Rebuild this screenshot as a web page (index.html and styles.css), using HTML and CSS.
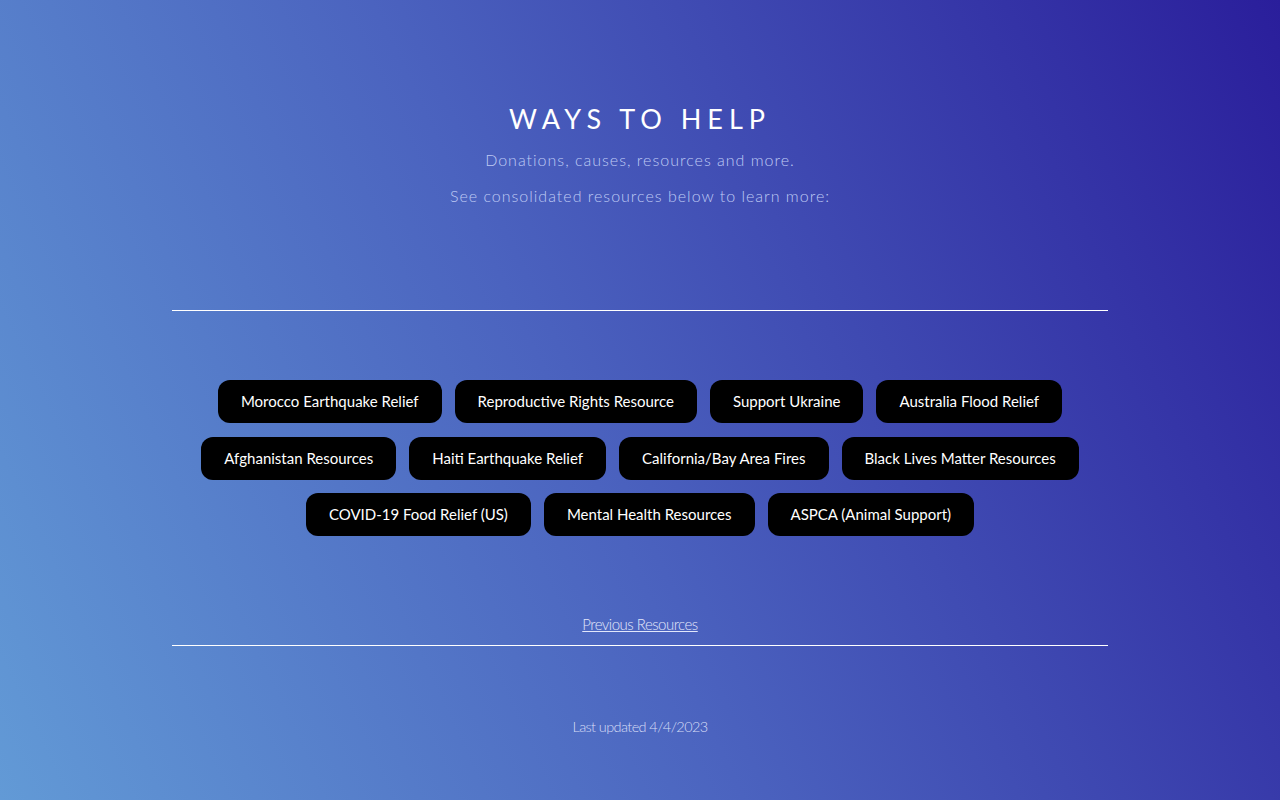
FILE: index.html
```html
<!DOCTYPE html>
<html>
  <head>
    <title>Ways to Help</title>
    <meta name="viewport" content="width=device-width, initial-scale=1.0">
    <link rel="stylesheet" href="styles.css">
  </head>
  <body>
    <div class="page">
      <header class="intro">
        <h1>WAYS TO HELP</h1>
        <p>Donations, causes, resources and more.</p>
        <p>See consolidated resources below to learn more:</p>
      </header>

      <hr>

      <div class="links">
        <a class="btn" href="#">Morocco Earthquake Relief</a>
        <a class="btn" href="#">Reproductive Rights Resource</a>
        <a class="btn" href="#">Support Ukraine</a>
        <a class="btn" href="#">Australia Flood Relief</a>
        <a class="btn" href="#">Afghanistan Resources</a>
        <a class="btn" href="#">Haiti Earthquake Relief</a>
        <a class="btn" href="#">California/Bay Area Fires</a>
        <a class="btn" href="#">Black Lives Matter Resources</a>
        <a class="btn" href="#">COVID-19 Food Relief (US)</a>
        <a class="btn" href="#">Mental Health Resources</a>
        <a class="btn" href="#">ASPCA (Animal Support)</a>
      </div>

      <div class="previous">
        <a href="#">Previous Resources</a>
      </div>

      <hr>

      <footer class="updated">Last updated 4/4/2023</footer>
    </div>
  </body>
</html>
```

FILE: styles.css
```css
html, body {
  margin: 0;
  height: 100%;
}
body {
  background: linear-gradient(65deg, #629ad6 0%, #4b63bf 45%, #2a1e9b 100%);
  color: #fff;
  font-family: Lato, "Open Sans", sans-serif;
}
.page {
  width: 936px;
  margin: 0 auto;
}
.intro {
  padding-top: 103px;
  height: 310px;
  box-sizing: border-box;
  text-align: center;
}
.intro h1 {
  margin: 0 0 14px;
  font-weight: 400;
  font-size: 27px;
  letter-spacing: 6px;
  line-height: 32px;
}
.intro p {
  margin: 0 0 14px;
  font-weight: 300;
  font-size: 16px;
  letter-spacing: 1px;
  line-height: 22px;
  color: #bfcaf4;
}
hr {
  margin: 0;
  border: none;
  border-top: 1px solid #fff;
}
.links {
  display: flex;
  flex-wrap: wrap;
  justify-content: center;
  gap: 13.5px 13px;
  margin-top: 69px;
}
.btn {
  display: block;
  background: #000;
  color: #fff;
  text-decoration: none;
  font-size: 15px;
  line-height: 43px;
  padding: 0 23px;
  border-radius: 12px;
}
.previous {
  margin-top: 79px;
  padding-bottom: 12px;
  text-align: center;
  font-size: 15px;
  font-weight: 300;
  letter-spacing: -0.5px;
}
.previous a {
  color: #e2e7fb;
}
.updated {
  padding-top: 72px;
  text-align: center;
  font-size: 14.5px;
  font-weight: 300;
  letter-spacing: -0.6px;
  color: #d7ddf6;
}
```
